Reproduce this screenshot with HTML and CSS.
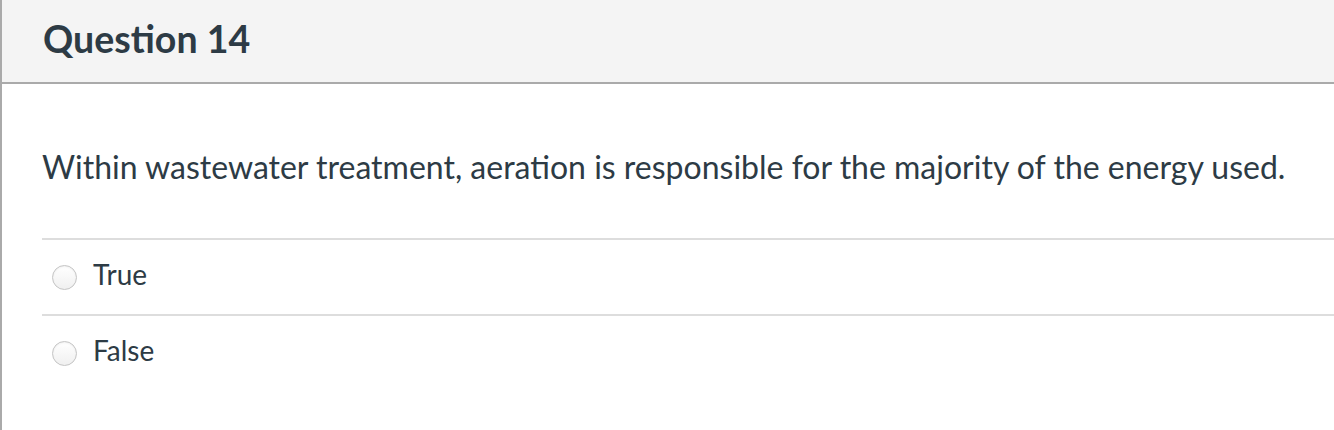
FILE: index.html
```html
<!DOCTYPE html>
<html>
<head>
<meta charset="utf-8">
<link rel="stylesheet" href="styles.css">
</head>
<body>
<div class="question">
  <div class="q-header"><h2 class="q-title">Question 14</h2></div>
  <div class="q-body">
    <p class="q-text">Within wastewater treatment, aeration is responsible for the majority of the energy used.</p>
    <div class="answers">
      <label class="answer"><span class="radio"></span><span class="answer-label">True</span></label>
      <label class="answer"><span class="radio"></span><span class="answer-label">False</span></label>
    </div>
  </div>
</div>
</body>
</html>
```
FILE: styles.css
```css
html, body {
  margin: 0;
  padding: 0;
  background: #fff;
}
body {
  font-family: Lato, "Noto Sans", sans-serif;
  color: #2d3b45;
}
.question {
  border-left: 2px solid #aaaaaa;
  height: 430px;
  box-sizing: border-box;
}
.q-header {
  background: #f4f4f4;
  border-bottom: 2px solid #aaaaaa;
  height: 66px;
  padding-top: 16px;
  padding-left: 41px;
}
.q-title {
  margin: 0;
  font-size: 37.5px;
  font-weight: 700;
  line-height: 45px;
}
.q-body {
  padding-left: 40px;
}
.q-text {
  margin: 0;
  padding-top: 63px;
  font-size: 32px;
  line-height: 40px;
  height: 91px;
}
.answers {
  display: flex;
  flex-direction: column;
}
.answer {
  display: flex;
  align-items: center;
  height: 74px;
  border-top: 2px solid #dddddd;
  padding-left: 10px;
}
.radio {
  width: 25px;
  height: 25px;
  border-radius: 50%;
  border: 1px solid #c4c4c4;
  box-sizing: border-box;
  background: linear-gradient(#ffffff, #f0f0f0);
  box-shadow: inset 0 1px 2px rgba(0, 0, 0, 0.06);
  margin-right: 16px;
}
.answer-label {
  font-size: 28px;
  padding-bottom: 7px;
}
```
